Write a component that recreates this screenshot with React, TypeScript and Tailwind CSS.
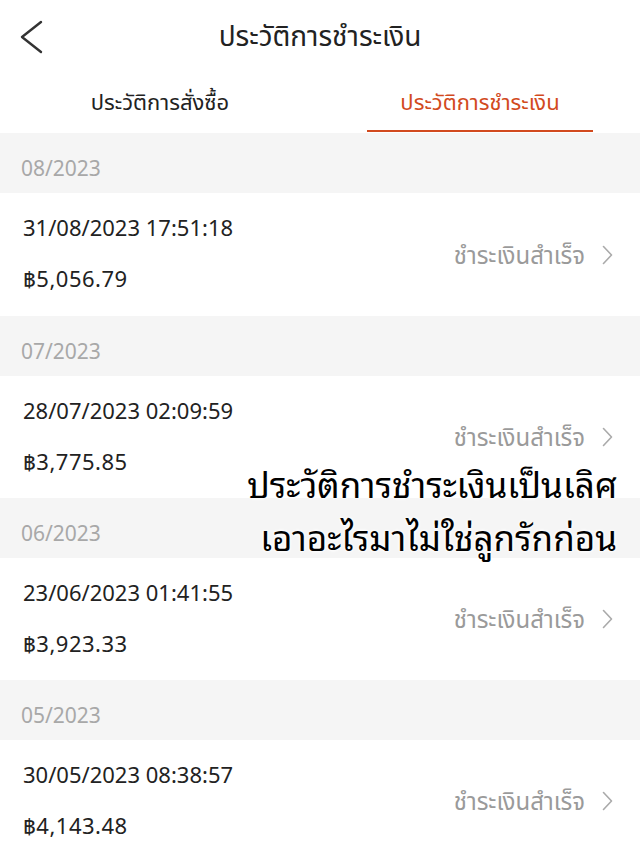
const payments = [
    { month: "08/2023", date: "31/08/2023 17:51:18", amount: "฿5,056.79" },
    { month: "07/2023", date: "28/07/2023 02:09:59", amount: "฿3,775.85" },
    { month: "06/2023", date: "23/06/2023 01:41:55", amount: "฿3,923.33" },
    { month: "05/2023", date: "30/05/2023 08:38:57", amount: "฿4,143.48" },
];

function App() {
    return (
        <div
            className="relative w-[640px] h-[853px] overflow-hidden bg-white text-[#222]"
            style={{ fontFamily: '"Noto Sans", "Noto Sans Thai", sans-serif' }}
        >
            <header className="relative h-[70px] flex items-center justify-center">
                <svg width="24" height="34" viewBox="0 0 24 34" className="absolute left-[20px] top-[20px]">
                    <polyline points="21,2 2,17 21,32" fill="none" stroke="#333" strokeWidth="2.4" strokeLinecap="round" strokeLinejoin="round" />
                </svg>
                <h1 className="text-[28px] font-normal">ประวัติการชำระเงิน</h1>
            </header>

            <div className="grid grid-cols-2 h-[63px]">
                <button className="flex items-center justify-center text-[22px] text-[#222]">ประวัติการสั่งซื้อ</button>
                <button className="relative flex items-center justify-center text-[22px] text-[#d24a1e]">
                    ประวัติการชำระเงิน
                    <span className="absolute bottom-[1px] left-[47px] w-[226px] h-[2px] bg-[#d24a1e]" />
                </button>
            </div>

            {payments.map((p, i) => (
                <section key={p.month}>
                    <div className="h-[60px] bg-[#f5f5f5] flex items-center pt-[11px] px-[21px] text-[21px] text-[#a8a8a8]">
                        {p.month}
                    </div>
                    <div className={`${i === 0 ? "h-[123px]" : "h-[122px]"} flex items-center justify-between pl-[23px] pr-[27px]`}>
                        <div className="flex flex-col gap-[23px] mb-[4px]">
                            <span className="text-[22px] leading-[28px]">{p.date}</span>
                            <span className="text-[22px] leading-[28px] tracking-[0.5px]">{p.amount}</span>
                        </div>
                        <div className="flex items-center gap-[17px] text-[24px] text-[#9a9a9a]">
                            ชำระเงินสำเร็จ
                            <svg width="11" height="20" viewBox="0 0 11 20">
                                <polyline points="1.5,1.5 9.5,10 1.5,18.5" fill="none" stroke="#aaa" strokeWidth="1.6" strokeLinecap="round" strokeLinejoin="round" />
                            </svg>
                        </div>
                    </div>
                </section>
            ))}

            <div
                className="absolute right-[23px] top-[462px] flex flex-col items-end gap-[13px] text-[35px] leading-[40px] font-normal text-black [text-shadow:0_0_3px_#fff,0_0_3px_#fff,0_0_4px_#fff]"
                style={{ fontFamily: '"Noto Sans Thai Looped", "Loma", "Noto Sans Thai", sans-serif' }}
            >
                <span>ประวัติการชำระเงินเป็นเลิศ</span>
                <span>เอาอะไรมาไม่ใช่ลูกรักก่อน</span>
            </div>
        </div>
    );
}

export default App;
